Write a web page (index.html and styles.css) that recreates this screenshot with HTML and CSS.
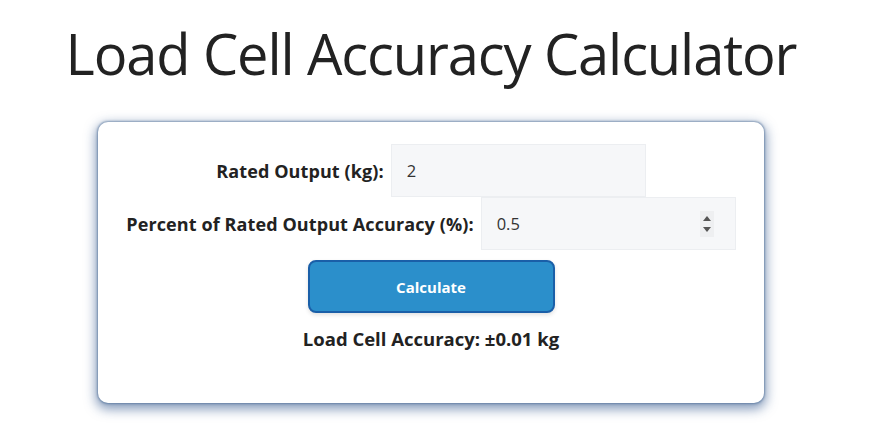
FILE: index.html
```html
<!DOCTYPE html>
<html>
<head>
<meta charset="utf-8">
<link rel="stylesheet" href="styles.css">
</head>
<body>
<main class="page">
  <h1 class="title">Load Cell Accuracy Calculator</h1>
  <section class="card">
    <div class="row">
      <label class="label" for="rated">Rated Output (kg):</label>
      <div class="field"><input class="input" id="rated" type="text" value="2"></div>
    </div>
    <div class="row">
      <label class="label" for="pct">Percent of Rated Output Accuracy (%):</label>
      <div class="field">
        <input class="input" id="pct" type="text" value="0.5">
        <span class="spinner">
          <svg width="12" height="26" viewBox="0 0 12 26"><path d="M2 10 L6 5 L10 10 Z" fill="#555"/><path d="M2 16 L10 16 L6 21 Z" fill="#555"/></svg>
        </span>
      </div>
    </div>
    <button class="btn" type="button">Calculate</button>
    <p class="result">Load Cell Accuracy: ±0.01 kg</p>
  </section>
</main>
</body>
</html>
```
FILE: styles.css
```css
html, body {
  margin: 0;
  padding: 0;
  background: #ffffff;
}
body {
  font-family: "Open Sans", "Noto Sans", sans-serif;
  color: #222222;
}
.page {
  width: 862px;
  padding-bottom: 33px;
  display: flex;
  flex-direction: column;
  align-items: center;
}
.title {
  margin: 20px 0 0;
  font-size: 56px;
  font-weight: 400;
  line-height: 67px;
  letter-spacing: -1.1px;
  color: #222222;
  white-space: nowrap;
}
.card {
  margin-top: 35px;
  width: 666px;
  height: 281px;
  box-sizing: border-box;
  background: #fff;
  border-radius: 10px;
  box-shadow: 0 0 2px 1px rgba(60, 95, 140, 0.5), 0 4px 12px 2px rgba(30, 70, 130, 0.55);
  padding-top: 22px;
  display: flex;
  flex-direction: column;
  align-items: center;
}
.row {
  display: flex;
  align-items: center;
  justify-content: center;
  gap: 7px;
}
.label {
  font-weight: 700;
  font-size: 18px;
  letter-spacing: 0.1px;
  color: #222;
}
.field {
  width: 255px;
  height: 53px;
  box-sizing: border-box;
  background: #f6f7f9;
  border: 1px solid #eceef1;
  display: flex;
  align-items: center;
  padding: 0 21px 0 15px;
}
.input {
  flex: 1;
  min-width: 0;
  border: none;
  background: transparent;
  font-family: "Open Sans", sans-serif;
  font-size: 16.5px;
  color: #333;
  padding: 0;
  outline: none;
}
.spinner {
  display: flex;
  align-items: center;
  justify-content: center;
  width: 14px;
  height: 26px;
  background: #eeeff1;
}
.spinner svg {
  display: block;
}
.btn {
  margin-top: 10px;
  width: 247px;
  height: 53px;
  background: #2b8fcb;
  border: 2px solid #1a5fa8;
  border-radius: 8px;
  color: #fff;
  font-family: "Open Sans", sans-serif;
  font-weight: 700;
  font-size: 15px;
  box-shadow: 0 2px 4px rgba(0, 0, 0, 0.12);
}
.result {
  margin: 13px 0 0;
  font-weight: 700;
  font-size: 18.5px;
  color: #222;
}
```
